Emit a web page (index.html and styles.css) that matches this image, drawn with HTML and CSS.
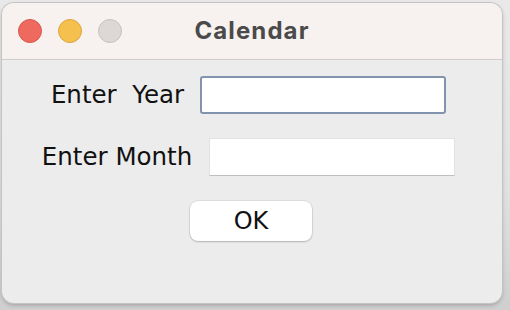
FILE: index.html
```html
<!DOCTYPE html>
<html>
<head>
<meta charset="utf-8">
<link rel="stylesheet" href="styles.css">
</head>
<body>
<div class="window">
  <div class="titlebar">
    <div class="lights">
      <span class="light red"></span>
      <span class="light yellow"></span>
      <span class="light gray"></span>
    </div>
    <div class="title">Calendar</div>
  </div>
  <div class="content">
    <div class="row row-year">
      <label class="label">Enter&nbsp; Year</label>
      <div class="field focused"></div>
    </div>
    <div class="row row-month">
      <label class="label">Enter Month</label>
      <div class="field"></div>
    </div>
    <div class="row row-button">
      <button class="btn">OK</button>
    </div>
  </div>
</div>
</body>
</html>
```

FILE: styles.css
```css
html, body {
  margin: 0;
  padding: 0;
}
body {
  width: 510px;
  height: 310px;
  background: linear-gradient(to bottom, #e9e9e9 0%, #e2e2e2 60%, #cfcfcf 100%);
  overflow: hidden;
  font-family: "DejaVu Sans", "Liberation Sans", sans-serif;
}
.window {
  margin: 3px 0 0 2px;
  width: 500px;
  height: 300px;
  border-radius: 12px;
  overflow: hidden;
  background: #ececec;
  box-shadow: 0 0 0 1px #c4c4c4, 0 2px 4px rgba(0,0,0,0.25);
  display: flex;
  flex-direction: column;
}
.titlebar {
  height: 56px;
  flex: none;
  background: #f7f2f0;
  border-bottom: 1px solid #cfcccb;
  position: relative;
  display: flex;
  align-items: center;
  justify-content: center;
}
.lights {
  position: absolute;
  left: 16px;
  top: 16px;
  display: flex;
  gap: 16px;
}
.light {
  width: 22px;
  height: 22px;
  border-radius: 50%;
  display: block;
}
.red { background: #ee6a5f; border: 1px solid #d8574c; }
.yellow { background: #f6c04f; border: 1px solid #dba542; }
.gray { background: #dcd8d6; border: 1px solid #c6c2c0; }
.title {
  font-family: "Inter", "Liberation Sans", sans-serif;
  font-weight: 700;
  font-size: 24px;
  letter-spacing: 1.1px;
  color: #4b4a4a;
  margin-left: 0px;
  margin-top: -2px;
}
.content {
  display: flex;
  flex-direction: column;
  align-items: center;
  padding-top: 16px;
}
.row {
  display: flex;
  align-items: center;
  height: 38px;
}
.row-year { gap: 16px; margin-left: -7px; }
.row-month { gap: 17px; margin-left: -7px; margin-top: 24px; }
.row-button { margin-top: 25px; height: 40px; }
.label {
  font-size: 24.5px;
  color: #111;
  line-height: 38px;
}
.field {
  width: 246px;
  height: 38px;
  box-sizing: border-box;
  background: #fff;
  border: 1px solid #e2e2e2;
  border-bottom: 1px solid #bdbdbd;
}
.field.focused {
  border: 2px solid #8293ad;
  border-radius: 3px;
}
.btn {
  width: 122px;
  height: 40px;
  border: none;
  border-radius: 8px;
  background: #fff;
  box-shadow: 0 0 0 0.5px rgba(0,0,0,0.12), 0 1px 2px rgba(0,0,0,0.2);
  font-family: "DejaVu Sans", "Liberation Sans", sans-serif;
  font-size: 24px;
  color: #111;
  padding: 0;
  margin-left: -2px;
}
```
